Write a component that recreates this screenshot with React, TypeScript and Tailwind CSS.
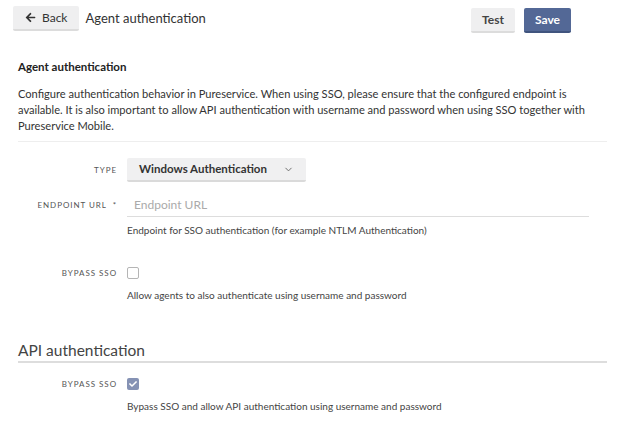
import React from "react";
import { FaArrowLeft, FaCheck } from "react-icons/fa";
import { FiChevronDown } from "react-icons/fi";

const font = { fontFamily: "Lato, 'Open Sans', sans-serif" };

function Label({ children }: { children: React.ReactNode }) {
  return (
    <div className="w-[99px] text-right text-[8px] uppercase tracking-[0.12em] text-[#555]">
      {children}
    </div>
  );
}

export default function App() {
  return (
    <div className="w-[618px] h-[429px] bg-white text-[#333] overflow-hidden" style={font}>
      {/* header */}
      <div className="flex items-center pl-[13px] pr-[47px] pt-[6px] h-[31px]">
        <button className="flex items-center gap-[6px] h-[25px] px-[12px] bg-[#efeff0] border-b-2 border-[#dcdcdc] rounded-[2px] text-[12px] text-[#333]">
          <FaArrowLeft className="text-[11px]" />
          <span>Back</span>
        </button>
        <div className="ml-[6px] text-[13px] text-[#333]">Agent authentication</div>
        <div className="flex-1" />
        <button className="mt-[4px] h-[25px] w-[44px] bg-[#efeff0] border-b-2 border-[#dcdcdc] rounded-[2px] text-[12px] font-bold text-[#444]">
          Test
        </button>
        <button className="mt-[4px] ml-[9px] h-[25px] w-[47px] bg-[#536896] border-b-2 border-[#40547e] rounded-[2px] text-[12px] font-bold text-white">
          Save
        </button>
      </div>

      <div className="pl-[18px] pr-[11px]">
        <div className="mt-[29px] text-[11.5px] font-bold text-[#222] leading-[14px]">Agent authentication</div>
        <p className="mt-[12px] text-[11.1px] leading-[16px] text-[#333] whitespace-nowrap">
          Configure authentication behavior in Pureservice. When using SSO, please ensure that the configured endpoint is
          <br />
          available. It is also important to allow API authentication with username and password when using SSO together with
          <br />
          Pureservice Mobile.
        </p>
        <div className="mt-[7px] h-px bg-[#eeeeee]" />

        {/* TYPE */}
        <div className="mt-[16px] flex items-center gap-[10px]">
          <Label>Type</Label>
          <div className="flex items-center justify-between w-[179px] h-[24px] pl-[12px] pr-[12px] bg-[#f0f0f1] border-b-2 border-[#dadada] rounded-[2px]">
            <span className="text-[11.5px] font-bold text-[#333]">Windows Authentication</span>
            <FiChevronDown className="text-[11px] text-[#666]" />
          </div>
        </div>

        {/* ENDPOINT */}
        <div className="mt-[11px] flex items-start gap-[10px]">
          <div className="pt-[6px]">
            <Label>Endpoint URL&nbsp;&nbsp;*</Label>
          </div>
          <div className="flex-1 mr-[18px]">
            <div className="h-[24px] border-b border-[#dddddd] flex items-center px-[7px] text-[12px] text-[#aaa]">
              Endpoint URL
            </div>
            <div className="mt-[6px] text-[10px] text-[#444] leading-[14px]">
              Endpoint for SSO authentication (for example NTLM Authentication)
            </div>
          </div>
        </div>

        {/* BYPASS SSO */}
        <div className="mt-[30px] flex items-center gap-[10px]">
          <Label>Bypass SSO</Label>
          <div className="w-[12px] h-[12px] border border-[#b5b5b5] rounded-[2px] bg-white" />
        </div>
        <div className="mt-[9px] ml-[109px] text-[10px] text-[#444] leading-[14px]">
          Allow agents to also authenticate using username and password
        </div>

        {/* API */}
        <div className="mt-[39px] text-[15.5px] text-[#444] leading-[18px]">API authentication</div>
        <div className="mt-[2px] h-[2px] bg-[#dddddd]" />

        <div className="mt-[15px] flex items-center gap-[10px]">
          <Label>Bypass SSO</Label>
          <div className="w-[12px] h-[12px] rounded-[2px] bg-[#8592b4] flex items-center justify-center">
            <FaCheck className="text-[8px] text-white" />
          </div>
        </div>
        <div className="mt-[9px] ml-[109px] text-[10px] text-[#444] leading-[14px]">
          Bypass SSO and allow API authentication using username and password
        </div>
      </div>
    </div>
  );
}
